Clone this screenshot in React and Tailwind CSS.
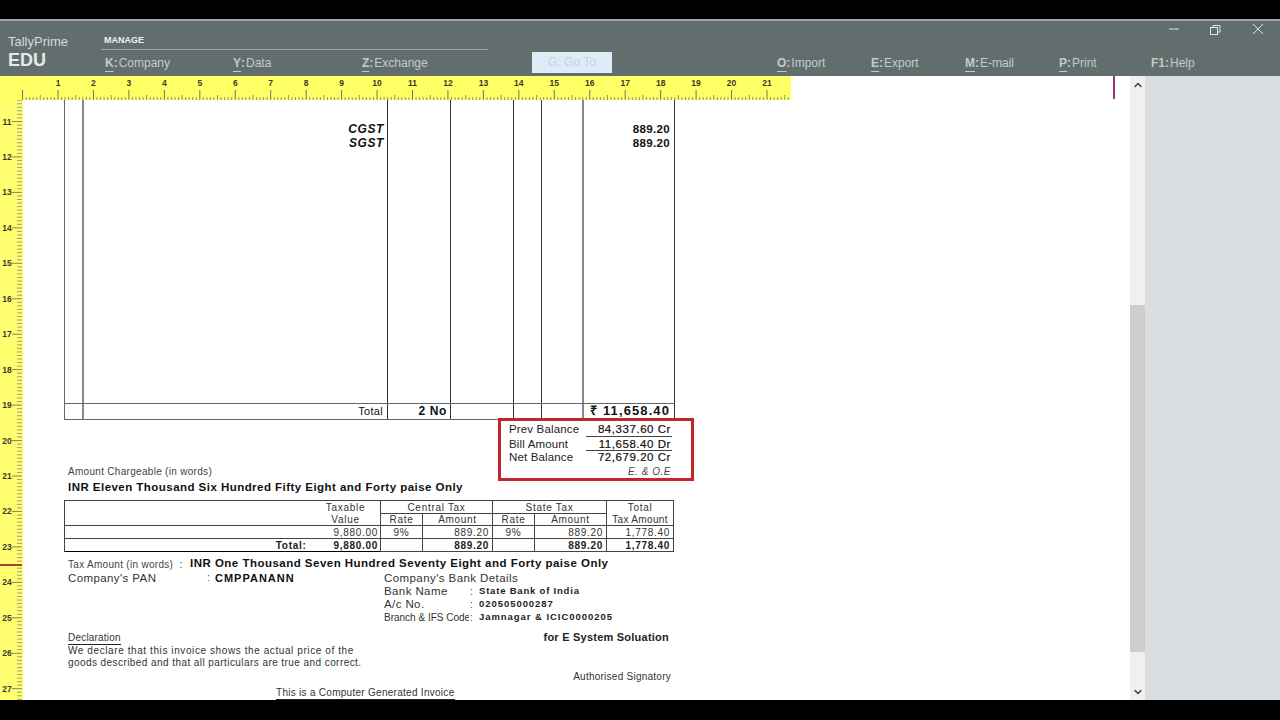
import React from 'react';
import { ChevronUp, ChevronDown } from 'lucide-react';

const STEP = 35.45;

function TopRuler() {
  const ticks = [];
  for (let i = 0; i < 220; i++) {
    const x = 22.55 + (i * STEP) / 10;
    if (x > 791) break;
    const h = i % 10 === 0 ? 10 : i % 5 === 0 ? 5 : 3;
    ticks.push(<line key={i} x1={x} x2={x} y1={24 - h} y2={24} stroke={i % 10 === 0 ? '#555' : '#77775a'} strokeWidth="0.8" />);
  }
  const nums = [];
  for (let n = 1; n <= 21; n++) {
    nums.push(
      <text key={n} x={58 + (n - 1) * STEP} y={10} textAnchor="middle" fontSize="8.5" fontWeight="700" fill="#3a3a2a">{n}</text>
    );
  }
  return (
    <svg width="791" height="24" className="block [font-family:'Liberation_Sans',sans-serif]">
      {ticks}
      {nums}
    </svg>
  );
}

function LeftRuler() {
  const ticks = [];
  for (let i = 0; i < 170; i++) {
    const y = 21.5 - STEP * 0.6 + (i * STEP) / 10;
    const major = i % 10 === 6;
    ticks.push(<line key={i} x1={major ? 12 : 17} x2={22} y1={y} y2={y} stroke={major ? '#666' : '#8a8a66'} strokeWidth="0.8" />);
  }
  const nums = [];
  for (let n = 11; n <= 27; n++) {
    nums.push(
      <text key={n} x={7} y={24.5 + (n - 11) * STEP} textAnchor="middle" fontSize="8.5" fontWeight="700" fill="#3a3a2a">{n}</text>
    );
  }
  return (
    <svg width="23" height="600" className="block shrink-0 bg-[#ffff70] [font-family:'Liberation_Sans',sans-serif]">
      {ticks}
      {nums}
    </svg>
  );
}

function MenuItem({ k, label, width }) {
  return (
    <div className={`flex items-baseline shrink-0 ${width}`}>
      <span className="font-bold text-[#c3caca] underline underline-offset-[4px]">{k[0]}</span>
      {k.length > 1 && <span className="font-bold text-[#c3caca]">{k.slice(1)}</span>}
      <span className="font-bold text-[#c3caca] mr-[1px]">:</span>
      <span>{label}</span>
    </div>
  );
}

function Header() {
  return (
    <header className="relative h-[57px] shrink-0 flex bg-[#626e6d] border-t-2 border-[#a3a7a7] text-[#c3caca] text-[12px] [font-family:'Liberation_Sans',sans-serif]">
      <div className="w-[101px] shrink-0 pl-2 pt-[13px] flex flex-col">
        <span className="text-[13px] leading-[15px] text-[#d5dada]">TallyPrime</span>
        <span className="mt-[1px] text-[18px] leading-[21px] font-bold text-[#e6e9e9]">EDU</span>
      </div>
      <div className="w-[387px] shrink-0 pt-[13px]">
        <div className="h-[16px] pl-[3px] text-[9px] leading-[12px] font-bold text-[#eef0f0] border-b border-[#8fa9bb]">MANAGE</div>
        <div className="flex pl-[4px] pt-[6px] leading-[14px]">
          <MenuItem k="K" label="Company" width="w-[128px]" />
          <MenuItem k="Y" label="Data" width="w-[129px]" />
          <MenuItem k="Z" label="Exchange" width="w-[100px]" />
        </div>
      </div>
      <div className="ml-[44px] mt-[31px] w-[80px] h-[21px] shrink-0 bg-[#dfebf6] text-[#c6d3df] leading-[21px] text-center">G: Go To</div>
      <div className="flex pl-[165px] pt-[35px] leading-[14px]">
        <MenuItem k="O" label="Import" width="w-[94px]" />
        <MenuItem k="E" label="Export" width="w-[94px]" />
        <MenuItem k="M" label="E-mail" width="w-[94px]" />
        <MenuItem k="P" label="Print" width="w-[92px]" />
        <div className="flex items-baseline">
          <span className="font-bold mr-[1px]">F1:</span>
          <span>Help</span>
        </div>
      </div>
      <div className="absolute right-0 top-0 h-[16px] flex items-center">
        <svg width="128" height="16" viewBox="0 0 128 16" fill="none" stroke="#dfe3e3" strokeWidth="1">
          <line x1="17" x2="27" y1="8" y2="8" />
          <rect x="58.5" y="6.5" width="7" height="7" />
          <path d="M61 6.5V4.5H68V11H65.5" />
          <path d="M101 3L111 13M111 3L101 13" />
        </svg>
      </div>
    </header>
  );
}

function ItemTable() {
  const cell = 'border-r border-[#333]';
  return (
    <div className="w-[611px] border-l border-b border-[#666] text-[#111]">
      <div className="flex h-[304px] border-b border-[#666]">
        <div className="w-[19px] border-r-2 border-[#888]" />
        <div className={`w-[304px] pt-[22px] pr-[3px] text-right text-[12px] leading-[14px] font-bold italic tracking-[0.6px] ${cell}`}>
          <div>CGST</div>
          <div>SGST</div>
        </div>
        <div className={`w-[63px] ${cell}`} />
        <div className={`w-[63px] ${cell}`} />
        <div className={`w-[28px] ${cell}`} />
        <div className="w-[42px] border-r-2 border-[#888]" />
        <div className={`w-[91px] pt-[22px] pr-[4px] text-right text-[11.5px] leading-[14px] font-bold tracking-[0.35px] ${cell}`}>
          <div>889.20</div>
          <div>889.20</div>
        </div>
      </div>
      <div className="flex h-[15px] leading-[14px]">
        <div className="w-[19px] border-r-2 border-[#888]" />
        <div className={`w-[304px] pr-[4px] text-right text-[11px] tracking-[0.3px] ${cell}`}>Total</div>
        <div className={`w-[63px] pr-[3px] text-right text-[12px] font-bold tracking-[0.6px] ${cell}`}>2 No</div>
        <div className={`w-[63px] ${cell}`} />
        <div className={`w-[28px] ${cell}`} />
        <div className="w-[42px] border-r-2 border-[#888]" />
        <div className={`w-[91px] pr-[4px] text-right text-[13px] font-bold tracking-[1.1px] ${cell}`}>₹ 11,658.40</div>
      </div>
    </div>
  );
}

function BalanceBox() {
  const amount = 'w-[86px] pr-[1px] text-right tracking-[0.55px] text-[#111] [-webkit-text-stroke:0.2px_#111]';
  return (
    <div className="w-[196px] h-[63px] shrink-0 mt-[-2px] ml-[-1px] border-[3px] border-[#c3252d] pl-[8px] pr-[19px] pt-[2px] text-[11.5px] leading-[14px] tracking-[0.15px] text-[#222]">
      <div className="flex justify-between h-[14px] leading-[12px]">
        <span>Prev Balance</span>
        <span className={`${amount} border-b border-[#444]`}>84,337.60 Cr</span>
      </div>
      <div className="flex justify-between h-[14px]">
        <span>Bill Amount</span>
        <span className={`${amount} border-b border-[#444]`}>11,658.40 Dr</span>
      </div>
      <div className="flex justify-between h-[13px] leading-[13px]">
        <span>Net Balance</span>
        <span className={amount}>72,679.20 Cr</span>
      </div>
      <div className="pt-[1px] pr-[1px] text-right text-[10px] leading-[13px] italic tracking-[0.5px] text-[#444]">E. &amp; O.E</div>
    </div>
  );
}

function TaxTable() {
  const td = 'border border-[#444] px-[3px] text-right';
  const head = 'border border-[#444] text-center';
  return (
    <table className="w-[609px] table-fixed border-collapse text-[10px] leading-[11px] tracking-[0.7px] text-[#333] border border-[#222]">
      <colgroup>
        <col className="w-[316px]" />
        <col className="w-[42px]" />
        <col className="w-[70px]" />
        <col className="w-[42px]" />
        <col className="w-[72px]" />
        <col className="w-[67px]" />
      </colgroup>
      <tbody>
        <tr className="h-[13px]">
          <td rowSpan={2} className="border border-[#444] px-[2px] text-right align-top">
            <div className="w-[64px] ml-auto pr-[1px] pt-[1px] text-center">Taxable</div>
            <div className="w-[64px] ml-auto pr-[1px] pt-[1px] text-center">Value</div>
          </td>
          <td colSpan={2} className={head}>Central Tax</td>
          <td colSpan={2} className={head}>State Tax</td>
          <td className="border-t border-l border-r border-[#444] text-center">Total</td>
        </tr>
        <tr className="h-[12px]">
          <td className={head}>Rate</td>
          <td className={head}>Amount</td>
          <td className={head}>Rate</td>
          <td className={head}>Amount</td>
          <td className="border-b border-l border-r border-[#444] text-center tracking-[0.35px]">Tax Amount</td>
        </tr>
        <tr className="h-[13px]">
          <td className="border border-[#444] px-[2px] text-right">9,880.00</td>
          <td className={head}>9%</td>
          <td className={td}>889.20</td>
          <td className={head}>9%</td>
          <td className={td}>889.20</td>
          <td className={td}>1,778.40</td>
        </tr>
        <tr className="h-[13px] font-bold text-[#222] border-b border-black">
          <td className="border-x border-[#444] px-[2px]">
            <div className="flex justify-end">
              <span className="mr-[27px]">Total:</span>
              <span>9,880.00</span>
            </div>
          </td>
          <td className={td} />
          <td className={td}>889.20</td>
          <td className={td} />
          <td className={td}>889.20</td>
          <td className={td}>1,778.40</td>
        </tr>
      </tbody>
    </table>
  );
}

function BankRow({ label, value, small, track }) {
  return (
    <div className="flex h-[13px] leading-[13px] whitespace-nowrap">
      <span className={`w-[85px] shrink-0 ${small ? 'text-[10px] tracking-[0px]' : 'text-[11.5px] tracking-[0.4px]'} text-[#333]`}>{label}</span>
      <span className="w-[10px] shrink-0 pl-[1px] text-[10px] text-[#444] relative z-10 bg-white">:</span>
      <span className={`text-[9.5px] leading-[11px] font-bold text-[#222] ${track}`}>{value}</span>
    </div>
  );
}

function Invoice() {
  return (
    <div className="flex-1 overflow-hidden bg-white pl-[41px] [font-family:'Liberation_Sans',sans-serif]">
      <ItemTable />
      <div className="flex w-[630px] h-[80px]">
        <div className="w-[435px] shrink-0 pl-[4px] flex flex-col justify-end pb-[6px]">
          <div className="text-[10px] leading-[14px] tracking-[0.3px] text-[#444]">Amount Chargeable (in words)</div>
          <div className="mt-[1px] text-[11.5px] leading-[14px] font-bold tracking-[0.46px] whitespace-nowrap text-[#111]">INR Eleven Thousand Six Hundred Fifty Eight and Forty paise Only</div>
        </div>
        <BalanceBox />
      </div>
      <TaxTable />
      <div className="w-[610px] pl-[4px] pt-[5px] flex items-center h-[19px] whitespace-nowrap">
        <span className="w-[122px] shrink-0 text-[10px] tracking-[0.3px] text-[#444]">Tax Amount (in words)&nbsp;&nbsp;:</span>
        <span className="text-[11.5px] font-bold tracking-[0.48px] text-[#111]">INR One Thousand Seven Hundred Seventy Eight and Forty paise Only</span>
      </div>
      <div className="flex w-[610px]">
        <div className="w-[320px] shrink-0 pl-[4px]">
          <div className="flex h-[14px] leading-[14px] items-center">
            <span className="w-[139px] text-[11.5px] tracking-[0.4px] text-[#333]">Company's PAN</span>
            <span className="w-[8px] text-[10px] text-[#444]">:</span>
            <span className="text-[11px] font-bold tracking-[1px] text-[#111]">CMPPANANN</span>
          </div>
          <div className="pt-[47px] text-[10px] leading-[12px] text-[#333] whitespace-nowrap">
            <div className="w-fit h-[13px] tracking-[0.2px] border-b border-[#222]">Declaration</div>
            <div className="tracking-[0.59px]">We declare that this invoice shows the actual price of the</div>
            <div className="tracking-[0.43px]">goods described and that all particulars are true and correct.</div>
          </div>
        </div>
        <div className="flex-1 pt-[1px]">
          <div className="h-[13px] leading-[13px] text-[11.5px] tracking-[0.42px] text-[#333]">Company's Bank Details</div>
          <BankRow label="Bank Name" value="State Bank of India" track="tracking-[0.8px]" />
          <BankRow label="A/c No." value="020505000287" track="tracking-[0.95px]" />
          <BankRow label="Branch & IFS Code" value="Jamnagar & ICIC0000205" small track="tracking-[0.95px]" />
          <div className="pt-[6px] pr-[5px] text-right text-[11px] leading-[14px] font-bold tracking-[0.23px] text-[#222]">for E System Soluation</div>
          <div className="pt-[27px] pr-[3px] text-right text-[10px] leading-[12px] tracking-[0.25px] text-[#333]">Authorised Signatory</div>
        </div>
      </div>
      <div className="pt-[4px] pl-[212px]">
        <div className="w-fit h-[13px] leading-[12px] text-[10px] tracking-[0.28px] text-[#333] border-b border-[#222] whitespace-nowrap">This is a Computer Generated Invoice</div>
      </div>
    </div>
  );
}

function Scrollbar() {
  return (
    <div className="w-[15px] shrink-0 flex flex-col bg-[#f0f0f0] text-[#444]">
      <div className="h-[18px] flex items-center justify-center"><ChevronUp size={12} strokeWidth={3} /></div>
      <div className="h-[211px]" />
      <div className="h-[347px] bg-[#cdcdcd]" />
      <div className="flex-1" />
      <div className="h-[16px] flex items-center justify-center"><ChevronDown size={12} strokeWidth={3} /></div>
    </div>
  );
}

export default function App() {
  return (
    <div className="w-[1280px] h-[720px] overflow-hidden flex flex-col bg-black">
      <div className="h-[19px] shrink-0" />
      <Header />
      <main className="h-[624px] shrink-0 flex">
        <div className="relative flex-1 flex flex-col bg-white overflow-hidden">
          <div className="w-[791px] h-[24px] shrink-0 bg-[#ffff66]">
            <TopRuler />
          </div>
          <div className="flex-1 flex overflow-hidden">
            <LeftRuler />
            <Invoice />
          </div>
          <div className="absolute left-[1113px] top-0 w-[2px] h-[23px] bg-[#a3307f]" />
          <div className="absolute left-0 top-[488px] w-[22px] h-[2px] bg-[#b03a3a]" />
        </div>
        <Scrollbar />
        <div className="w-[135px] shrink-0 bg-[#dadee2]" />
      </main>
      <div className="flex-1" />
    </div>
  );
}
